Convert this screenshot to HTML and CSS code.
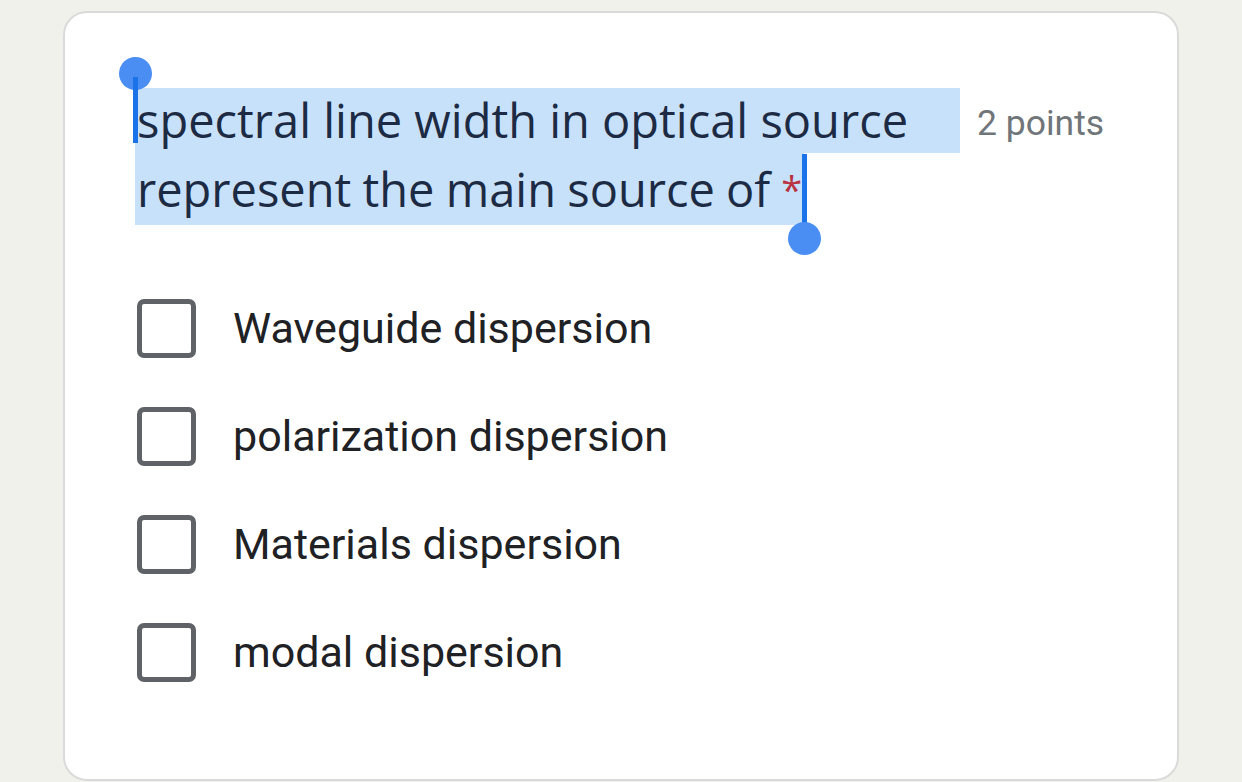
FILE: index.html
```html
<!DOCTYPE html>
<html>
<head>
<meta charset="utf-8">
<link rel="stylesheet" href="styles.css">
</head>
<body>
<div class="card">
  <div class="header">
    <div class="title">
      <div class="line line1">spectral line width in optical source</div>
      <div class="line line2"><span class="sel">represent the main source of <span class="req">*</span><span class="handle end"><span class="bar"></span><span class="knob"></span></span></span></div>
      <span class="handle start"><span class="knob"></span><span class="bar"></span></span>
    </div>
    <div class="points">2 points</div>
  </div>
  <div class="options">
    <label class="option"><span class="box"></span><span class="label">Waveguide dispersion</span></label>
    <label class="option"><span class="box"></span><span class="label">polarization dispersion</span></label>
    <label class="option"><span class="box"></span><span class="label">Materials dispersion</span></label>
    <label class="option"><span class="box"></span><span class="label">modal dispersion</span></label>
  </div>
</div>
</body>
</html>
```
FILE: styles.css
```css
html, body {
  margin: 0;
  padding: 0;
  background: #f1f1eb;
  width: 1242px;
  height: 782px;
  overflow: hidden;
}
body {
  padding: 11px 0 0 63px;
  box-sizing: border-box;
}
.card {
  width: 1116px;
  height: 770px;
  box-sizing: border-box;
  background: #fff;
  border: 2px solid #dadada;
  border-radius: 24px;
  padding: 75px 0 0 70px;
}
.header {
  display: flex;
  align-items: flex-start;
}
.title {
  position: relative;
  width: 825px;
  font-family: "Open Sans", sans-serif;
  font-size: 47px;
  color: #1c2b43;
}
.line {
  white-space: nowrap;
}
.line1 {
  background: #c8e1fb;
  height: 65px;
  line-height: 64px;
  padding-left: 2px;
}
.line2 {
  height: 72px;
  line-height: 72px;
  word-spacing: -1px;
}
.sel {
  position: relative;
  display: inline-block;
  background: #c8e1fb;
  padding-left: 2px;
  padding-right: 2px;
}
.req {
  color: #b8323f;
  font-size: 38px;
  vertical-align: 3px;
}
.handle {
  position: absolute;
  display: flex;
  flex-direction: column;
  align-items: center;
  width: 34px;
}
.handle.start {
  left: -17px;
  top: -31px;
}
.handle.end {
  right: -17px;
  top: 1px;
}
.knob {
  width: 33px;
  height: 33px;
  border-radius: 50%;
  background: #4a8ef4;
}
.bar {
  width: 5px;
  background: #1a73e8;
}
.start .bar {
  height: 66px;
  margin-top: -13px;
}
.end .bar {
  height: 80px;
  margin-bottom: -12px;
}
.points {
  margin-left: 17px;
  margin-top: 14px;
  font-family: "Roboto", sans-serif;
  font-size: 35.5px;
  color: #70757a;
}
.options {
  display: flex;
  flex-direction: column;
  gap: 49px;
  margin-top: 74px;
  padding-left: 2px;
}
.option {
  display: flex;
  align-items: center;
  height: 59px;
}
.box {
  width: 59px;
  height: 59px;
  box-sizing: border-box;
  border: 5px solid #5f6368;
  border-radius: 7px;
  flex: none;
}
.label {
  margin-left: 37px;
  font-family: "Roboto", sans-serif;
  font-size: 43px;
  color: #202124;
  position: relative;
  top: -1px;
}
```
